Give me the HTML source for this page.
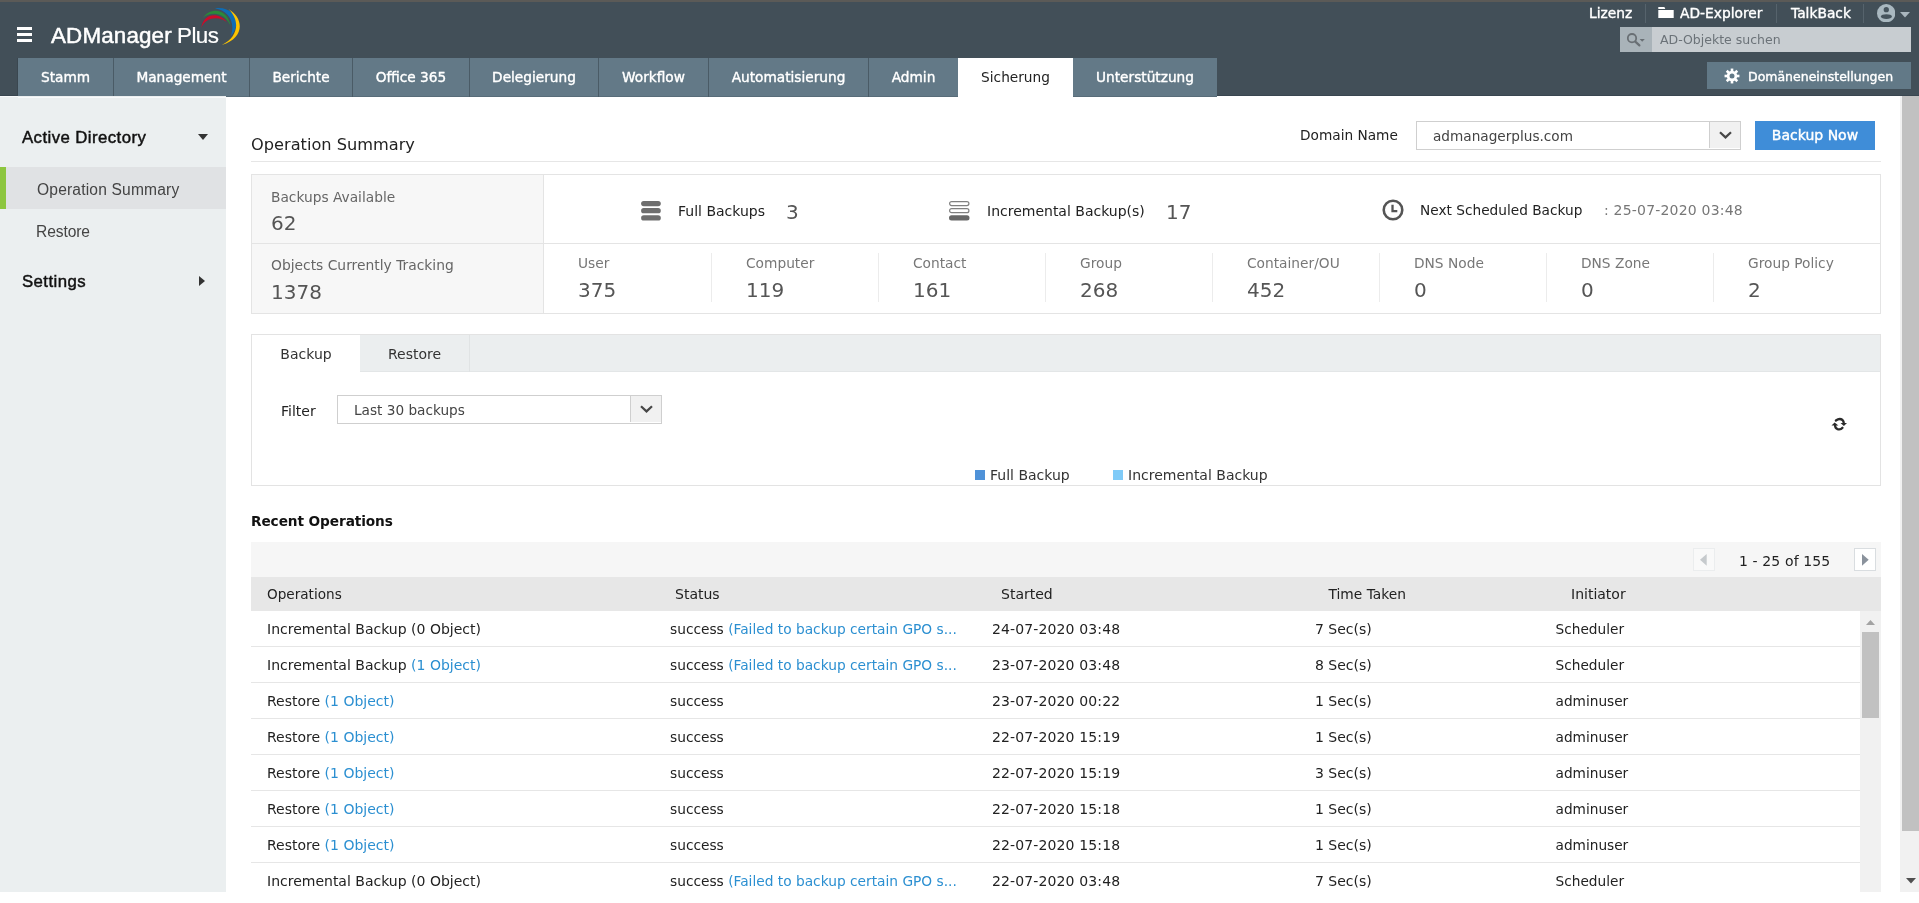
<!DOCTYPE html>
<html lang="de">
<head>
<meta charset="utf-8">
<title>ADManager Plus</title>
<style>
*{box-sizing:border-box;margin:0;padding:0}
html,body{width:1919px;height:903px;overflow:hidden;background:#fff}
body{position:relative;will-change:transform;font-family:"DejaVu Sans","Liberation Sans",sans-serif;font-size:14px;color:#222;line-height:1}
.abs{position:absolute}
.t{position:absolute;white-space:nowrap;line-height:1}
/* ---------- header ---------- */
#strip{left:0;top:0;width:1919px;height:2px;background:#5b5a57}
#hdr{left:0;top:2px;width:1919px;height:94px;background:#424f58;box-shadow:inset 0 -1px 0 #394650}
#burger i{position:absolute;left:0;width:15px;height:3px;background:#fff}
#logo{left:51px;top:25px;font-family:"Liberation Sans","DejaVu Sans",sans-serif;font-size:22.4px;color:#fff;letter-spacing:-.1px;-webkit-text-stroke:.4px #fff}
.nav{position:absolute;top:58px;height:39px;box-shadow:inset 0 -1px 0 #586c79;background:#637987;border-right:1px solid #4a5b66;color:#fff;text-align:center;font-size:13.7px;line-height:39px;white-space:nowrap;-webkit-text-stroke:.3px #fff;text-shadow:0 0 1px rgba(255,255,255,.35)}
.nav.on{background:#fff;color:#222;border-right:none;text-shadow:none;box-shadow:none;-webkit-text-stroke:0}
.tl{position:absolute;top:6px;color:#fff;font-size:13.8px;white-space:nowrap;line-height:14px;-webkit-text-stroke:.3px #fff;text-shadow:0 0 1px rgba(255,255,255,.3)}
.vsep{position:absolute;top:4px;width:1px;height:19px;background:#56636c}
#srch{left:1620px;top:27px;width:291px;height:25px;background:#c8cdd1}
#srch .ic{position:absolute;left:0;top:0;width:32px;height:25px;background:#a9b3b9}
#srch .ph{position:absolute;left:40px;top:6px;font-size:12.5px;color:#6b7278;white-space:nowrap;line-height:14px}
#dom{left:1707px;top:62px;width:204px;height:27px;background:#627987}
#dom .tx{position:absolute;left:41px;top:7px;font-size:12.5px;color:#fff;white-space:nowrap;line-height:15px;-webkit-text-stroke:.3px #fff;text-shadow:0 0 1px rgba(255,255,255,.4)}
/* ---------- sidebar ---------- */
#side{left:0;top:96px;width:226px;height:796px;background:#ebeff0;font-family:"Liberation Sans","DejaVu Sans",sans-serif}
#side .h{position:absolute;left:22px;font-size:16.8px;color:#111;-webkit-text-stroke:.45px #111;letter-spacing:.42px;white-space:nowrap;line-height:20px}
#side .it{position:absolute;font-size:15.6px;color:#444;white-space:nowrap;line-height:20px;letter-spacing:.17px}
#side .act{position:absolute;left:0;top:71px;width:226px;height:42px;background:#e0e2e4;border-left:6px solid #8dc63f}

/* ---------- main ---------- */
#title{left:251px;top:135px;font-size:16.2px;color:#222;line-height:20px}
#tline{left:251px;top:161px;width:1630px;height:1px;background:#e6e6e6}
.sel{position:absolute;width:325px;height:29px;border:1px solid #cfcfcf;background:#fff}
.sel .v{position:absolute;left:16px;top:6px;font-size:13.65px;color:#444;white-space:nowrap;line-height:16px}
.sel .b{position:absolute;right:0;top:0;width:31px;height:26px;background:#f1f1f1;border-left:1px solid #cfcfcf}
.sel svg{position:absolute;right:8.5px;top:9px}
#bnow{left:1755px;top:121px;width:120px;height:29px;background:#3f8dd8;color:#fff;text-align:center;line-height:28px;font-size:14px;-webkit-text-stroke:.3px #fff;text-shadow:0 0 1px rgba(255,255,255,.4)}
#sum{left:251px;top:174px;width:1630px;height:140px;border:1px solid #e4e4e4;background:#fff}
#sum .lc{position:absolute;left:0;width:292px;background:#f7f7f7;border-right:1px solid #e4e4e4}
#sum .hl{position:absolute;left:0;top:68px;width:1628px;height:1px;background:#e4e4e4}
.lb{position:absolute;font-size:14px;color:#666;white-space:nowrap;line-height:16px}
.num{position:absolute;font-size:20px;color:#555;white-space:nowrap;line-height:22px}
.lb2{position:absolute;font-size:14px;color:#222;white-space:nowrap;line-height:16px}
.cell{position:absolute;top:78px;width:167px;height:49px;border-left:1px solid #ececec}
.cell .lb{left:34px;top:2px;color:#777;font-size:13.75px}
.cell .num{left:34px;top:26px}

/* ---------- chart panel ---------- */
#pan{left:251px;top:334px;width:1630px;height:152px;border:1px solid #e3e3e3;background:#fff}
#pan .bar{position:absolute;left:0;top:0;width:1628px;height:37px;background:#ebeeef;border-bottom:1px solid #e3e6e7}
#pan .tb{position:absolute;top:0;height:37px;width:109px;text-align:center;line-height:39px;font-size:14px;color:#333}
#pan .tb.on{background:#fff;height:37px}
#pan .tb.off{border-right:1px solid #e0e3e4}
.lg{position:absolute;top:135px;width:10px;height:10px}
/* ---------- table ---------- */
#rtitle{left:251px;top:512px;font-size:13.7px;font-weight:bold;color:#111;line-height:18px;letter-spacing:-.1px}
#tbar{left:251px;top:542px;width:1630px;height:35px;background:#f6f6f6}
.pg{position:absolute;top:6px;width:22px;height:23px;border:1px solid #e6e6e6}
#thead{left:251px;top:577px;width:1630px;height:34px;background:#e7e7e7}
#thead div{position:absolute;top:8px;font-size:14px;color:#222;white-space:nowrap;line-height:18px}
#tbody{left:251px;top:611px;width:1609px;height:281px;overflow:hidden}
.row{position:relative;height:36px;border-bottom:1px solid #e6e6e6}
.row span{position:absolute;top:9px;font-size:14px;color:#222;white-space:nowrap;line-height:18px}
.row a{color:#2b8fd1;text-decoration:none}
.c1{left:16px}.c2{left:419px;font-size:13.75px!important}.c3{left:741px}.c4{left:1064px}.c5{left:1304.5px;font-size:13.7px!important}
#isb{left:1860px;top:611px;width:21px;height:281px;background:#f1f1f1}
#psb{left:1900px;top:96px;width:19px;height:796px;background:#f1f1f1}
</style>
</head>
<body>
<!-- HEADER -->
<div id="strip" class="abs"></div>
<div id="hdr" class="abs"></div>
<div id="burger" class="abs" style="left:17px;top:27px;width:15px;height:15px"><i style="top:0"></i><i style="top:6px"></i><i style="top:12px"></i></div>
<div id="logo" class="t"><span style="letter-spacing:.15px;-webkit-text-stroke:.5px #fff">ADManager</span><span style="letter-spacing:-.5px;-webkit-text-stroke:.2px #fff;margin-left:-.6px"> Plus</span></div>
<svg class="abs" style="left:200px;top:6px" width="44" height="42" viewBox="0 0 44 42">
  <path d="M1.3 22C3 8 18 5 27 16.2C19 9.5 5 11 1.3 22Z" fill="#cb0b2a"/>
  <path d="M3 11.8C10 1.5 27 1 30.8 20.3C25 6 11 5 3 11.8Z" fill="#2a8a3a"/>
  <path d="M14.9 2.4C30 -1 45 14 30.7 30.3C36 16 28 4 14.9 2.4Z" fill="#0e6cb5"/>
  <path d="M28.7 3.2C44 12 45 32 21.8 38.9C39 31 40 14 28.7 3.2Z" fill="#fcc400"/>
</svg>
<div class="nav" style="left:17px;width:97px;border-left:1px solid #3a4750">Stamm</div>
<div class="nav" style="left:114px;width:136px">Management</div>
<div class="nav" style="left:250px;width:103px">Berichte</div>
<div class="nav" style="left:353px;width:117px">Office 365</div>
<div class="nav" style="left:470px;width:129px">Delegierung</div>
<div class="nav" style="left:599px;width:110px">Workflow</div>
<div class="nav" style="left:709px;width:160px">Automatisierung</div>
<div class="nav" style="left:869px;width:89px;border-right:none">Admin</div>
<div class="nav on" style="left:958px;width:115px">Sicherung</div>
<div class="nav" style="left:1073px;width:144px;border-right:none">Unterstützung</div>

<div class="tl" style="left:1589px">Lizenz</div>
<div class="vsep" style="left:1645px"></div>
<svg class="abs" style="left:1658px;top:6.7px" width="16" height="11" viewBox="0 0 16 11"><path d="M.3 0H6.4L7.3 1.9H.3ZM.3 3H15.7V11H.3Z" fill="#fff"/></svg>
<div class="tl" style="left:1680px">AD-Explorer</div>
<div class="vsep" style="left:1776px"></div>
<div class="tl" style="left:1791px">TalkBack</div>
<div class="vsep" style="left:1863px"></div>
<svg class="abs" style="left:1876.8px;top:3.8px" width="18.4" height="18.4" viewBox="0 0 18.4 18.4"><circle cx="9.2" cy="9.2" r="9.2" fill="#a9b8c0"/><circle cx="9.3" cy="5.7" r="2.65" fill="#46545d"/><ellipse cx="9.4" cy="12.6" rx="5.5" ry="2.45" fill="#46545d"/></svg>
<svg class="abs" style="left:1900px;top:12px" width="10" height="6" viewBox="0 0 10 6"><path d="M0 0H10L5 5.5Z" fill="#a9b6be"/></svg>

<div id="srch" class="abs"><div class="ic"></div>
  <svg class="abs" style="left:7px;top:5px" width="20" height="16" viewBox="0 0 20 16"><circle cx="5" cy="6.2" r="4.2" fill="none" stroke="#696f74" stroke-width="1.8"/><path d="M8.3 9.6L12.4 13.4" stroke="#696f74" stroke-width="2.2" stroke-linecap="round"/><path d="M12.6 7H17.8L15.2 9.8Z" fill="#696f74"/></svg>
  <div class="ph">AD-Objekte suchen</div>
</div>
<div id="dom" class="abs">
  <svg class="abs" style="left:17.4px;top:6.1px" width="16" height="16" viewBox="-8 -8 16 16"><g fill="#fff"><rect x="-1.3" y="-7.45" width="2.6" height="4" transform="rotate(0)"/><rect x="-1.3" y="-7.45" width="2.6" height="4" transform="rotate(45)"/><rect x="-1.3" y="-7.45" width="2.6" height="4" transform="rotate(90)"/><rect x="-1.3" y="-7.45" width="2.6" height="4" transform="rotate(135)"/><rect x="-1.3" y="-7.45" width="2.6" height="4" transform="rotate(180)"/><rect x="-1.3" y="-7.45" width="2.6" height="4" transform="rotate(225)"/><rect x="-1.3" y="-7.45" width="2.6" height="4" transform="rotate(270)"/><rect x="-1.3" y="-7.45" width="2.6" height="4" transform="rotate(315)"/><path fill-rule="evenodd" d="M0-5.2A5.2 5.2 0 1 0 0 5.2A5.2 5.2 0 1 0 0-5.2ZM0-2.5A2.5 2.5 0 1 1 0 2.5A2.5 2.5 0 1 1 0-2.5Z"/></g></svg>
  <div class="tx">Domäneneinstellungen</div>
</div>

<div class="abs" style="left:0;top:96px;width:18px;height:1px;background:#f8fafb;z-index:3"></div>
<div class="abs" style="left:18px;top:97px;width:208px;height:1px;background:#f8fafb;z-index:3"></div>
<!-- SIDEBAR -->
<div id="side" class="abs">
  <div class="h" style="top:32px">Active Directory</div>
  <svg class="abs" style="left:198px;top:38px" width="10" height="6" viewBox="0 0 10 6"><path d="M0 0H10L5 6Z" fill="#333"/></svg>
  <div class="act"></div>
  <div class="it" style="left:37px;top:83.5px">Operation Summary</div>
  <div class="it" style="left:36px;top:125.5px;letter-spacing:-.1px">Restore</div>
  <div class="h" style="top:176px">Settings</div>
  <svg class="abs" style="left:199px;top:180px" width="6" height="10" viewBox="0 0 6 10"><path d="M0 0V10L6 5Z" fill="#333"/></svg>
</div>

<!-- MAIN -->
<div id="title" class="t">Operation Summary</div>
<div id="tline" class="abs"></div>
<div class="lb2" style="left:1300px;top:127px;font-size:13.7px">Domain Name</div>
<div class="sel" style="left:1416px;top:121px"><div class="v">admanagerplus.com</div><div class="b"></div><svg width="13" height="9" viewBox="0 0 13 9"><path d="M1 1.3L6.5 6.4L12 1.3" fill="none" stroke="#474747" stroke-width="2.2"/></svg></div>
<div id="bnow" class="abs">Backup Now</div>

<div id="sum" class="abs">
  <div class="lc" style="top:0;height:68px"></div>
  <div class="lc" style="top:69px;height:69px"></div>
  <div class="hl"></div>
  <div class="lb" style="left:19px;top:14px;font-size:13.75px">Backups Available</div>
  <div class="num" style="left:19px;top:37px">62</div>
  <div class="lb" style="left:19px;top:82px;font-size:13.85px">Objects Currently Tracking</div>
  <div class="num" style="left:19px;top:106px">1378</div>

  <svg class="abs" style="left:389px;top:26px" width="21" height="20" viewBox="0 0 21 20"><rect x=".1" y="0" width="19.7" height="5.2" rx="2.6" fill="#6e6e6e"/><rect x=".1" y="7.1" width="19.7" height="5.2" rx="2.6" fill="#6e6e6e"/><rect x=".1" y="14.3" width="19.7" height="5.3" rx="2.6" fill="#6e6e6e"/></svg>
  <div class="lb2" style="left:426px;top:28px">Full Backups</div>
  <div class="num" style="left:534px;top:26px">3</div>

  <svg class="abs" style="left:697px;top:26px" width="21" height="20" viewBox="0 0 21 20"><rect x=".6" y=".6" width="19.3" height="4" rx="2" fill="none" stroke="#808080" stroke-width="1.2"/><rect x=".6" y="7.7" width="19.3" height="4" rx="2" fill="none" stroke="#808080" stroke-width="1.2"/><rect x="0" y="14.3" width="20.5" height="5.3" rx="2.5" fill="#676767"/></svg>
  <div class="lb2" style="left:735px;top:28px">Incremental Backup(s)</div>
  <div class="num" style="left:914px;top:26px">17</div>

  <svg class="abs" style="left:1130px;top:24px" width="22" height="22" viewBox="0 0 23 23"><circle cx="11.5" cy="11.5" r="9.7" fill="none" stroke="#555" stroke-width="2.7"/><path d="M11 6V12.6H16" fill="none" stroke="#555" stroke-width="2.4"/></svg>
  <div class="lb2" style="left:1168px;top:27px;font-size:13.7px">Next Scheduled Backup</div>
  <div class="lb" style="left:1352px;top:27px;color:#777;letter-spacing:.2px">: 25-07-2020 03:48</div>

  <div class="cell" style="left:292px;border-left:none"><div class="lb">User</div><div class="num">375</div></div>
  <div class="cell" style="left:459px"><div class="lb">Computer</div><div class="num">119</div></div>
  <div class="cell" style="left:626px"><div class="lb">Contact</div><div class="num">161</div></div>
  <div class="cell" style="left:793px"><div class="lb">Group</div><div class="num">268</div></div>
  <div class="cell" style="left:960px"><div class="lb">Container/OU</div><div class="num">452</div></div>
  <div class="cell" style="left:1127px"><div class="lb">DNS Node</div><div class="num">0</div></div>
  <div class="cell" style="left:1294px"><div class="lb">DNS Zone</div><div class="num">0</div></div>
  <div class="cell" style="left:1461px"><div class="lb">Group Policy</div><div class="num">2</div></div>
</div>
<div id="pan" class="abs">
  <div class="bar"></div>
  <div class="tb on" style="left:0;width:108px">Backup</div>
  <div class="tb off" style="left:108px;width:110px">Restore</div>
  <div class="lb2" style="left:29px;top:68px">Filter</div>
  <div class="sel" style="left:85px;top:60px"><div class="v">Last 30 backups</div><div class="b"></div><svg width="13" height="9" viewBox="0 0 13 9"><path d="M1 1.3L6.5 6.4L12 1.3" fill="none" stroke="#474747" stroke-width="2.2"/></svg></div>
  <svg class="abs" style="left:1579px;top:82px" width="17" height="15" viewBox="0 0 17 15"><path d="M4.9 3.5Q8.6 .7 11.5 3Q12.8 4.3 12.8 6.4" fill="none" stroke="#2a2a2a" stroke-width="2.3" stroke-linecap="round"/><path d="M9.5 6H16L12.9 9Z" fill="#2a2a2a"/><path d="M4.1 8.2Q4 10.8 6.4 12.1Q9.6 13.2 11.5 10.8" fill="none" stroke="#2a2a2a" stroke-width="2.3" stroke-linecap="round"/><path d="M.5 8.6H7.4L3.6 5.4Z" fill="#2a2a2a"/></svg>
  <div class="lg" style="left:723px;background:#4f92d8"></div>
  <div class="lb2" style="left:738px;top:132px;color:#333">Full Backup</div>
  <div class="lg" style="left:861px;background:#80cbf8"></div>
  <div class="lb2" style="left:876px;top:132px;color:#333">Incremental Backup</div>
</div>

<div id="rtitle" class="t">Recent Operations</div>
<div id="tbar" class="abs">
  <div class="pg" style="left:1442px;background:#f9f9f9;border-color:#ebedee"><svg class="abs" style="left:6.2px;top:5.2px" width="6.7" height="11.7" viewBox="0 0 6.7 11.7"><path d="M6.7 0V11.7L0 5.85Z" fill="#c6cacd"/></svg></div>
  <div class="t" style="left:1488px;top:10px;font-size:14px;color:#222;line-height:18px;letter-spacing:.12px">1 - 25 of 155</div>
  <div class="pg" style="left:1603px;background:#fff;border-color:#d9dde0"><svg class="abs" style="left:7.3px;top:5.2px" width="6.7" height="11.7" viewBox="0 0 6.7 11.7"><path d="M0 0V11.7L6.7 5.85Z" fill="#8a929c"/></svg></div>
</div>
<div id="thead" class="abs"><div style="left:16px;font-size:13.6px">Operations</div><div style="left:424px">Status</div><div style="left:750px">Started</div><div style="left:1077.5px;font-size:13.8px">Time Taken</div><div style="left:1320px">Initiator</div></div>
<div id="tbody" class="abs">
  <div class="row"><span class="c1">Incremental Backup (0 Object)</span><span class="c2">success <a>(Failed to backup certain GPO s...</a></span><span class="c3" style="letter-spacing:.13px">24-07-2020 03:48</span><span class="c4">7 Sec(s)</span><span class="c5">Scheduler</span></div>
  <div class="row"><span class="c1">Incremental Backup <a>(1 Object)</a></span><span class="c2">success <a>(Failed to backup certain GPO s...</a></span><span class="c3" style="letter-spacing:.13px">23-07-2020 03:48</span><span class="c4">8 Sec(s)</span><span class="c5">Scheduler</span></div>
  <div class="row"><span class="c1">Restore <a>(1 Object)</a></span><span class="c2">success</span><span class="c3" style="letter-spacing:.13px">23-07-2020 00:22</span><span class="c4">1 Sec(s)</span><span class="c5">adminuser</span></div>
  <div class="row"><span class="c1">Restore <a>(1 Object)</a></span><span class="c2">success</span><span class="c3" style="letter-spacing:.13px">22-07-2020 15:19</span><span class="c4">1 Sec(s)</span><span class="c5">adminuser</span></div>
  <div class="row"><span class="c1">Restore <a>(1 Object)</a></span><span class="c2">success</span><span class="c3" style="letter-spacing:.13px">22-07-2020 15:19</span><span class="c4">3 Sec(s)</span><span class="c5">adminuser</span></div>
  <div class="row"><span class="c1">Restore <a>(1 Object)</a></span><span class="c2">success</span><span class="c3" style="letter-spacing:.13px">22-07-2020 15:18</span><span class="c4">1 Sec(s)</span><span class="c5">adminuser</span></div>
  <div class="row"><span class="c1">Restore <a>(1 Object)</a></span><span class="c2">success</span><span class="c3" style="letter-spacing:.13px">22-07-2020 15:18</span><span class="c4">1 Sec(s)</span><span class="c5">adminuser</span></div>
  <div class="row"><span class="c1">Incremental Backup (0 Object)</span><span class="c2">success <a>(Failed to backup certain GPO s...</a></span><span class="c3" style="letter-spacing:.13px">22-07-2020 03:48</span><span class="c4">7 Sec(s)</span><span class="c5">Scheduler</span></div>
</div>
<div id="isb" class="abs">
  <svg class="abs" style="left:6px;top:9px" width="9" height="5" viewBox="0 0 9 5"><path d="M0 5H9L4.5 0Z" fill="#a3a3a3"/></svg>
  <div class="abs" style="left:2px;top:21px;width:17px;height:86px;background:#c1c1c1"></div>
</div>
<div id="psb" class="abs">
  <div class="abs" style="left:2px;top:0;width:17px;height:735px;background:#c1c1c1"></div>
  <svg class="abs" style="left:6px;top:782px" width="10" height="6" viewBox="0 0 10 6"><path d="M0 0H10L5 5.5Z" fill="#505050"/></svg>
</div>

</body>
</html>
